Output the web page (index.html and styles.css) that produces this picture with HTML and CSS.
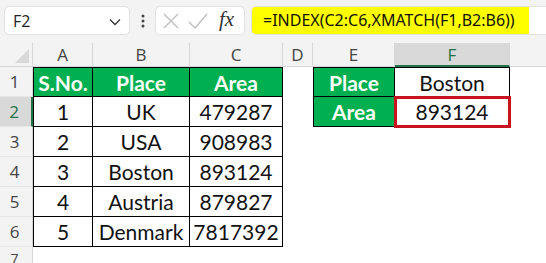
FILE: index.html
```html
<!DOCTYPE html>
<html lang="en">
<head>
    <meta charset="UTF-8">
    <title>INDEX XMATCH</title>
    <link rel="stylesheet" href="styles.css">
</head>
<body>
    <div class="toolbar">
        <div class="name-box">
            <span>F2</span>
            <svg class="chevron" width="12" height="8" viewBox="0 0 12 8"><path d="M1 1.5 L6 6.5 L11 1.5" fill="none" stroke="#333" stroke-width="1.3"/></svg>
        </div>
        <svg class="dots" width="4" height="14" viewBox="0 0 4 14"><circle cx="2" cy="2" r="1.5" fill="#444"/><circle cx="2" cy="7" r="1.5" fill="#444"/><circle cx="2" cy="12" r="1.5" fill="#444"/></svg>
        <div class="fx-box">
            <svg width="16" height="16" viewBox="0 0 16 16"><path d="M1 1 L15 15 M15 1 L1 15" stroke="#bdbdbd" stroke-width="1.3"/></svg>
            <svg width="20" height="16" viewBox="0 0 20 16"><path d="M1 9 L7 15 L19 1" fill="none" stroke="#bdbdbd" stroke-width="1.3"/></svg>
            <span class="fx">fx</span>
        </div>
        <div class="formula">
            <span class="formula-text">=INDEX(C2:C6,XMATCH(F1,B2:B6))</span>
        </div>
    </div>

    <div class="sheet">
        <div class="corner"><div class="triangle"></div></div>
        <div class="hd">A</div>
        <div class="hd">B</div>
        <div class="hd">C</div>
        <div class="hd">D</div>
        <div class="hd">E</div>
        <div class="hd sel">F</div>
        <div class="hd last"></div>

        <div class="rh">1</div>
        <div class="t g top left">S.No.</div>
        <div class="t g top">Place</div>
        <div class="t g top">Area</div>
        <div class="cell"></div>
        <div class="t g top left">Place</div>
        <div class="t top">Boston</div>
        <div class="cell"></div>

        <div class="rh sel">2</div>
        <div class="t left">1</div>
        <div class="t">UK</div>
        <div class="t">479287</div>
        <div class="cell"></div>
        <div class="t g left">Area</div>
        <div class="t active">893124</div>
        <div class="cell"></div>

        <div class="rh">3</div>
        <div class="t left">2</div>
        <div class="t">USA</div>
        <div class="t">908983</div>
        <div class="cell"></div>
        <div class="cell"></div>
        <div class="cell"></div>
        <div class="cell"></div>

        <div class="rh">4</div>
        <div class="t left">3</div>
        <div class="t">Boston</div>
        <div class="t">893124</div>
        <div class="cell"></div>
        <div class="cell"></div>
        <div class="cell"></div>
        <div class="cell"></div>

        <div class="rh">5</div>
        <div class="t left">4</div>
        <div class="t">Austria</div>
        <div class="t">879827</div>
        <div class="cell"></div>
        <div class="cell"></div>
        <div class="cell"></div>
        <div class="cell"></div>

        <div class="rh">6</div>
        <div class="t left">5</div>
        <div class="t">Denmark</div>
        <div class="t">7817392</div>
        <div class="cell"></div>
        <div class="cell"></div>
        <div class="cell"></div>
        <div class="cell"></div>

        <div class="rh row7">7</div>
        <div class="cell"></div>
        <div class="cell"></div>
        <div class="cell"></div>
        <div class="cell"></div>
        <div class="cell"></div>
        <div class="cell"></div>
        <div class="cell"></div>
    </div>
</body>
</html>
```

FILE: styles.css
```css
* {
    box-sizing: border-box;
    margin: 0;
    padding: 0;
}

body {
    background: #ffffff;
    width: 546px;
    height: 263px;
    overflow: hidden;
    font-family: 'Open Sans', 'Noto Sans', sans-serif;
}

.toolbar {
    height: 43px;
    background: #f3f3f3;
    display: flex;
    align-items: flex-start;
    padding: 6px 0 0 4px;
}

.name-box {
    width: 126px;
    height: 29px;
    background: #fff;
    border: 1px solid #e1e1e1;
    border-radius: 5px;
    display: flex;
    align-items: center;
    justify-content: space-between;
    padding: 0 8px 0 8px;
    font-size: 16px;
    color: #222;
}

.chevron {
    margin-top: 2px;
}

.dots {
    margin: 8px 10px 0 11px;
}

.fx-box {
    width: 90px;
    height: 29px;
    background: #fff;
    border: 1px solid #e1e1e1;
    border-radius: 5px;
    display: flex;
    align-items: center;
    gap: 9px;
    padding: 0 0 0 7px;
}

.fx {
    font-family: 'Liberation Serif', serif;
    font-style: italic;
    font-size: 21px;
    color: #333;
    margin-left: 2px;
    margin-top: -3px;
}

.formula {
    flex: 1;
    margin-left: 6px;
    height: 29px;
    background: #fff;
    border: 1px solid #e1e1e1;
    border-right: none;
    border-radius: 5px 0 0 5px;
    display: flex;
}

.formula-text {
    width: 277px;
    height: 100%;
    background: #ffff00;
    border-radius: 4px 0 0 4px;
    font-family: 'Noto Sans', sans-serif;
    font-size: 16px;
    color: #111;
    line-height: 27px;
    padding-left: 11px;
    white-space: nowrap;
}

.sheet {
    display: grid;
    grid-template-columns: 33px 60px 97px 93px 30px 82px 115px 1fr;
    grid-template-rows: 24px repeat(6, 30px) 16px;
    font-family: 'Lato', 'Open Sans', sans-serif;
}

.corner {
    background: #f3f3f3;
    border-right: 1px solid #d6d6d6;
    border-bottom: 1px solid #d6d6d6;
    position: relative;
}

.triangle {
    position: absolute;
    right: 3px;
    bottom: 3px;
    width: 0;
    height: 0;
    border-left: 14px solid transparent;
    border-bottom: 14px solid #d9d9d9;
}

.hd {
    background: #f3f3f3;
    border-right: 1px solid #d6d6d6;
    border-bottom: 1px solid #d6d6d6;
    font-family: 'Open Sans', sans-serif;
    font-size: 17px;
    color: #444;
    display: flex;
    align-items: center;
    justify-content: center;
}

.hd.last {
    border-right: none;
}

.hd.sel {
    background: #d9d9d9;
    color: #217346;
    border-bottom: 2px solid #217346;
}

.rh {
    background: #f3f3f3;
    border-right: 1px solid #d6d6d6;
    border-bottom: 1px solid #e6e6e6;
    font-family: 'Open Sans', sans-serif;
    font-size: 17px;
    color: #444;
    display: flex;
    align-items: center;
    justify-content: center;
    padding-right: 3px;
}

.rh.row7 {
    align-items: flex-start;
    font-size: 14px;
    line-height: 1;
    padding-top: 5px;
    border-bottom: none;
}

.rh.sel {
    background: #d9d9d9;
    color: #217346;
    border-right: 2px solid #217346;
}

.cell {
    background: #fff;
}

.t {
    background: #fff;
    border-right: 1px solid #000;
    border-bottom: 1px solid #000;
    font-size: 21px;
    color: #111;
    display: flex;
    align-items: center;
    justify-content: center;
    white-space: nowrap;
}

.t.top {
    border-top: 1px solid #000;
}

.t.left {
    border-left: 1px solid #000;
}

.t.g {
    background: #00b050;
    color: #fff;
    font-weight: bold;
}

.t.active {
    outline: 3px solid #c8141e;
    outline-offset: -2px;
    position: relative;
    z-index: 1;
}
```
